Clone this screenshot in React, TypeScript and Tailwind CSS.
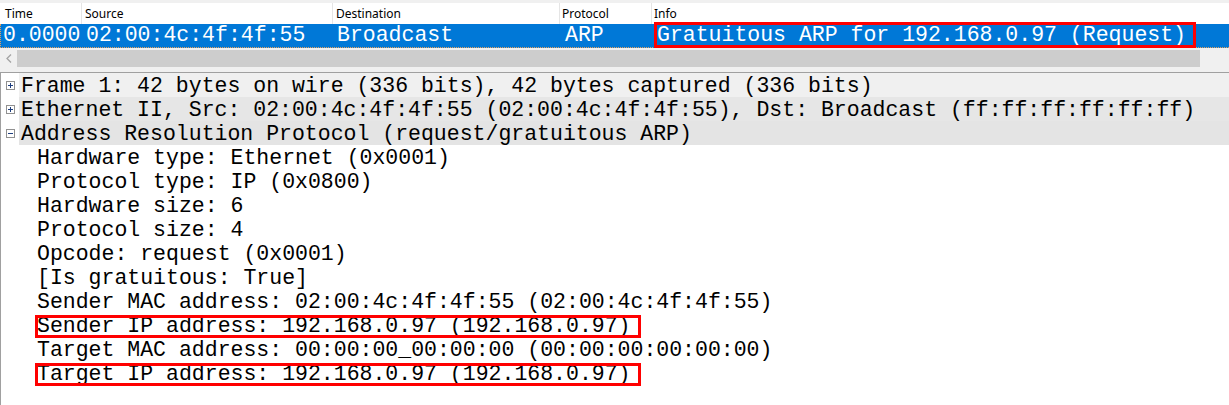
import React from "react";

const mono = "font-['Liberation_Mono',monospace] text-[21.5px]";

function ExpandBox({ open }: { open: boolean }) {
  return (
    <svg width="9" height="9" viewBox="0 0 9 9" className="block">
      <rect x="0.5" y="0.5" width="8" height="8" fill="#fff" stroke="#919191" />
      <line x1="2" y1="4.5" x2="7" y2="4.5" stroke="#1f3f7f" />
      {!open && <line x1="4.5" y1="2" x2="4.5" y2="7" stroke="#1f3f7f" />}
    </svg>
  );
}

function TopRow({ open, text, bg }: { open: boolean; text: string; bg: string }) {
  return (
    <div className="flex h-[24px] items-center">
      <div className="w-[18px] h-full flex items-center pl-[5px]">
        <ExpandBox open={open} />
      </div>
      <div className={`flex-1 h-full pl-[2px] pt-[2px] leading-[22px] whitespace-nowrap ${bg}`}>{text}</div>
    </div>
  );
}

function ChildRow({ text, boxed }: { text: string; boxed?: boolean }) {
  return (
    <div className="h-[24px] pl-[36px] pt-[2px] leading-[22px] whitespace-nowrap relative">
      {text}
      {boxed && (
        <div className="absolute left-[34px] top-[2px] h-[23px] w-[606px] border-[3px] border-[#ff0000]" />
      )}
    </div>
  );
}

export default function App() {
  const children: { t: string; b?: boolean }[] = [
    { t: "Hardware type: Ethernet (0x0001)" },
    { t: "Protocol type: IP (0x0800)" },
    { t: "Hardware size: 6" },
    { t: "Protocol size: 4" },
    { t: "Opcode: request (0x0001)" },
    { t: "[Is gratuitous: True]" },
    { t: "Sender MAC address: 02:00:4c:4f:4f:55 (02:00:4c:4f:4f:55)" },
    { t: "Sender IP address: 192.168.0.97 (192.168.0.97)", b: true },
    { t: "Target MAC address: 00:00:00_00:00:00 (00:00:00:00:00:00)" },
    { t: "Target IP address: 192.168.0.97 (192.168.0.97)", b: true },
  ];
  return (
    <div className="w-[1229px] h-[405px] bg-white overflow-hidden flex flex-col">
      <div className="h-[3px] bg-[#f0f0f0]" />
      {/* header */}
      <div className="flex h-[21px] items-center bg-white text-[12px] text-black font-['Noto_Sans','Open_Sans',sans-serif] leading-[21px]">
        <div className="w-[82px] h-full pl-[5px] border-r border-[#e5e5e5]">Time</div>
        <div className="w-[251px] h-full pl-[3px] border-r border-[#e5e5e5]">Source</div>
        <div className="w-[227px] h-full pl-[3px] border-r border-[#e5e5e5]">Destination</div>
        <div className="w-[92px] h-full pl-[2px] border-r border-[#e5e5e5]">Protocol</div>
        <div className="flex-1 h-full pl-[2px]">Info</div>
      </div>
      {/* selected packet row */}
      <div className={`flex h-[24px] leading-[23px] bg-[#0078d7] text-white border-b border-l border-dotted border-[#e0a060] ${mono}`}>
        <div className="w-[81px] pl-[2px] overflow-hidden whitespace-nowrap">0.0000</div>
        <div className="w-[251px] pl-[4px] whitespace-nowrap">02:00:4c:4f:4f:55</div>
        <div className="w-[227px] pl-[4px] whitespace-nowrap">Broadcast</div>
        <div className="w-[92px] pl-[5px] whitespace-nowrap">ARP</div>
        <div className="flex-1 pl-[5px] whitespace-nowrap relative">
          Gratuitous ARP for 192.168.0.97 (Request)
          <div className="absolute left-[2px] top-[-2px] h-[26px] w-[542px] border-[3px] border-[#ff0000]" />
        </div>
      </div>
      <div className="h-[2px] bg-[#f0f0f0]" />
      {/* horizontal scrollbar */}
      <div className="flex h-[17px] bg-[#f0f0f0]">
        <div className="w-[17px] h-full flex items-center justify-center">
          <svg width="6" height="9" viewBox="0 0 6 9">
            <path d="M5 0.5 L1 4.5 L5 8.5" fill="none" stroke="#a3a3a3" strokeWidth="1.3" />
          </svg>
        </div>
        <div className="w-[1183px] h-full bg-[#cdcdcd]" />
        <div className="flex-1" />
      </div>
      <div className="h-[5px] bg-[#f0f0f0]" />
      <div className="h-px bg-[#a0a0a0]" />
      {/* detail tree */}
      <div className={`flex-1 border-l border-[#a0a0a0] text-black ${mono}`}>
        <TopRow open={false} bg="bg-[#f0f0f0]" text="Frame 1: 42 bytes on wire (336 bits), 42 bytes captured (336 bits)" />
        <TopRow open={false} bg="bg-[#e6e6e6]" text="Ethernet II, Src: 02:00:4c:4f:4f:55 (02:00:4c:4f:4f:55), Dst: Broadcast (ff:ff:ff:ff:ff:ff)" />
        <TopRow open={true} bg="bg-[#e4e4e4]" text="Address Resolution Protocol (request/gratuitous ARP)" />
        {children.map((c) => (
          <ChildRow key={c.t} text={c.t} boxed={c.b} />
        ))}
      </div>
    </div>
  );
}
